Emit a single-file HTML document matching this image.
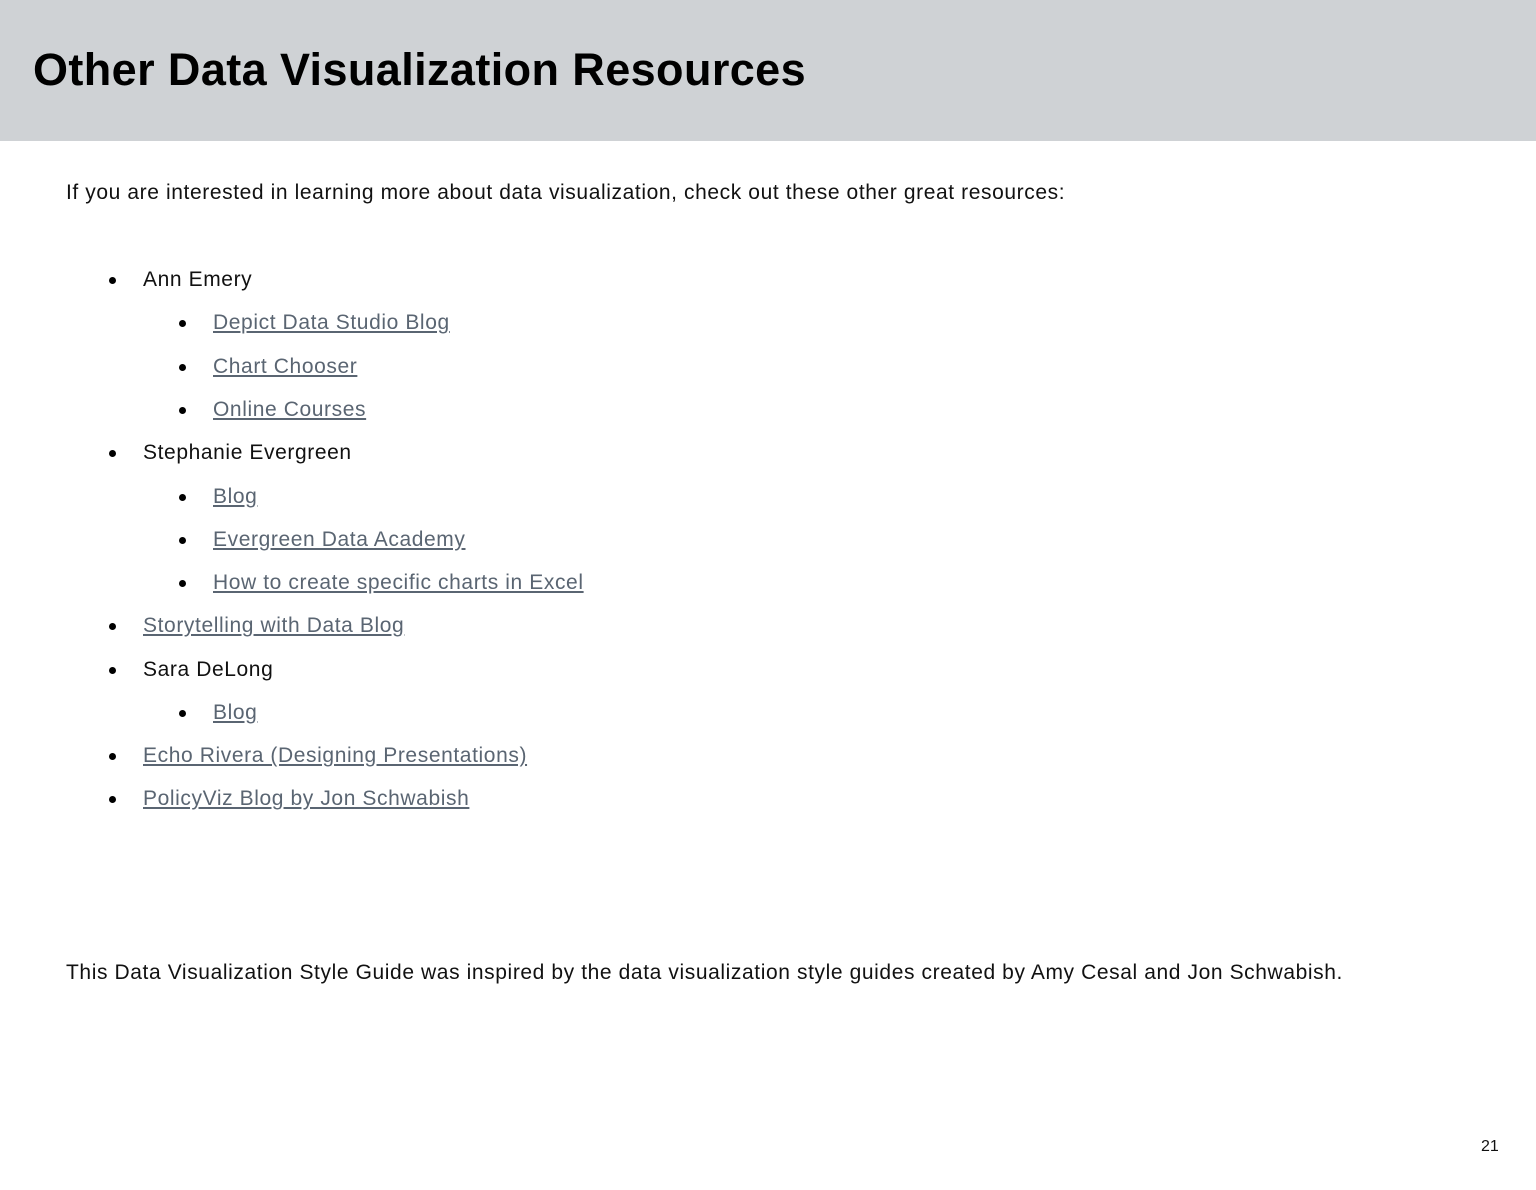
<!DOCTYPE html>
<html><head><style>
body{margin:0;width:1536px;height:1190px;background:#fff;font-family:"Liberation Sans",sans-serif;position:relative;overflow:hidden}
.hdr{position:absolute;left:0;top:0;width:1536px;height:141px;background:#cfd2d5}
.hdr h1{position:absolute;left:33px;top:40px;margin:0;font-size:45px;font-weight:bold;color:#000;letter-spacing:0.4px;line-height:60px}
.t{position:absolute;font-size:21px;letter-spacing:0.6px;color:#111;white-space:nowrap;line-height:26px}
.a{color:#5a6572;text-decoration:underline}
.b{position:absolute;width:7px;height:7px;border-radius:50%;background:#000}
</style></head><body>
<div class="hdr"><h1>Other Data Visualization Resources</h1></div>
<div class="t" style="left:66px;top:180px">If you are interested in learning more about data visualization, check out these other great resources:</div>

<div class="b" style="left:109px;top:277px"></div><div class="t" style="left:143px;top:267px">Ann Emery</div>
<div class="b" style="left:179px;top:320px"></div><div class="t a" style="left:213px;top:310px">Depict Data Studio Blog</div>
<div class="b" style="left:179px;top:364px"></div><div class="t a" style="left:213px;top:354px">Chart Chooser</div>
<div class="b" style="left:179px;top:407px"></div><div class="t a" style="left:213px;top:397px">Online Courses</div>
<div class="b" style="left:109px;top:450px"></div><div class="t" style="left:143px;top:440px">Stephanie Evergreen</div>
<div class="b" style="left:179px;top:494px"></div><div class="t a" style="left:213px;top:484px">Blog</div>
<div class="b" style="left:179px;top:537px"></div><div class="t a" style="left:213px;top:527px">Evergreen Data Academy</div>
<div class="b" style="left:179px;top:580px"></div><div class="t a" style="left:213px;top:570px">How to create specific charts in Excel</div>
<div class="b" style="left:109px;top:623px"></div><div class="t a" style="left:143px;top:613px">Storytelling with Data Blog</div>
<div class="b" style="left:109px;top:667px"></div><div class="t" style="left:143px;top:657px">Sara DeLong</div>
<div class="b" style="left:179px;top:710px"></div><div class="t a" style="left:213px;top:700px">Blog</div>
<div class="b" style="left:109px;top:753px"></div><div class="t a" style="left:143px;top:743px">Echo Rivera (Designing Presentations)</div>
<div class="b" style="left:109px;top:796px"></div><div class="t a" style="left:143px;top:786px">PolicyViz Blog by Jon Schwabish</div>

<div class="t" style="left:66px;top:960px">This Data Visualization Style Guide was inspired by the data visualization style guides created by Amy Cesal and Jon Schwabish.</div>
<div class="t" style="left:1481px;top:1134px;font-size:16px;letter-spacing:0">21</div>
</body></html>
